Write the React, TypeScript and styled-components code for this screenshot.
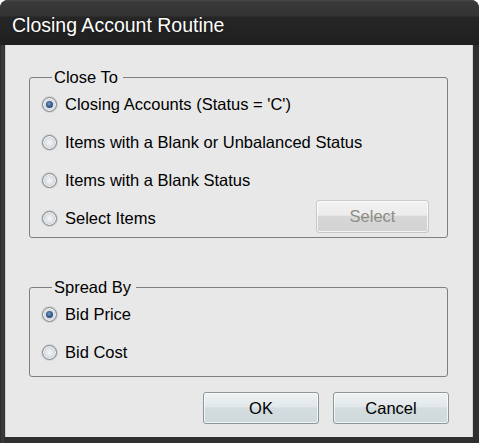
import React from "react";
import styled, { createGlobalStyle } from "styled-components";

const GlobalStyle = createGlobalStyle`
  html, body {
    margin: 0;
    padding: 0;
    background: #ffffff;
  }
  body {
    font-family: "Liberation Sans", Arial, sans-serif;
    overflow: hidden;
  }
`;

const Window = styled.div`
  width: 479px;
  height: 443px;
  display: flex;
  flex-direction: column;
  background: #2e2e2e;
  border-radius: 8px 8px 0 0;
  box-sizing: border-box;
  overflow: hidden;
`;

const TitleBar = styled.div`
  height: 45px;
  flex: none;
  display: flex;
  align-items: center;
  padding: 6px 0 0 12px;
  box-sizing: border-box;
  background: linear-gradient(to bottom, #4a4a4a 0px, #3a3a3a 2px, #333333 16px, #262626 17px, #1f1f1f 45px);
`;

const Title = styled.span`
  color: #ffffff;
  font-size: 19.5px;
  line-height: 19px;
  text-shadow: 0 0 2px rgba(0, 0, 0, 0.6);
`;

const Frame = styled.div`
  flex: 1;
  display: flex;
  padding: 0 6px 6px 5px;
  background: linear-gradient(to right, #2c2c2c, #3e3e3e 3px, #2f2f2f 5px);
`;

const Client = styled.div`
  flex: 1;
  display: flex;
  flex-direction: column;
  background: #e8e8e8;
  padding: 24px 25px 12px 24px;
  box-shadow: inset 1px 0 0 #cfcfcf, inset -1px 0 0 #d0d0d0;
`;

const GroupBox = styled.fieldset<{ $gap?: number; $bottom?: number }>`
  margin: ${(p) => p.$gap ?? 0}px 0 0 0;
  padding: 0 18px ${(p) => p.$bottom ?? 0}px 12px;
  border: 1px solid #7f7f7f;
  border-radius: 3px;
  min-width: 0;
`;

const Legend = styled.legend`
  margin-left: 10px;
  padding: 0 5px 0 2px;
  font-size: 16.5px;
  line-height: 16px;
  color: #000000;
`;

const Row = styled.label`
  height: 38px;
  display: flex;
  align-items: center;
  gap: 8px;
  font-size: 16.5px;
  color: #000000;
  cursor: default;
`;

const RowText = styled.span`
  flex: 1;
  white-space: nowrap;
`;

const RadioMark = styled.span<{ $checked?: boolean }>`
  position: relative;
  width: 15px;
  height: 15px;
  flex: none;
  border-radius: 50%;
  box-sizing: border-box;
  border: 1px solid #80858a;
  background: radial-gradient(circle at 50% 50%, #f4f5f6 0%, #dfe2e5 45%, #b4b9be 80%, #a2a7ac 100%);
  box-shadow: inset 0 0 0 1px #fafafa, 0 0 0 1px rgba(190, 194, 198, 0.55);

  &::after {
    content: "";
    display: ${(p) => (p.$checked ? "block" : "none")};
    position: absolute;
    left: 3px;
    top: 3px;
    width: 7px;
    height: 7px;
    border-radius: 50%;
    background: radial-gradient(circle at 45% 40%, #7f9ec8 0%, #3b5e92 45%, #1b3764 100%);
  }
`;

const Button = styled.button<{ $disabled?: boolean }>`
  width: 116px;
  height: 32px;
  padding: 0;
  box-sizing: border-box;
  font-family: "Liberation Sans", Arial, sans-serif;
  font-size: 16.5px;
  border-radius: 3px;
  color: ${(p) => (p.$disabled ? "#8d8d85" : "#000000")};
  border: 1px solid ${(p) => (p.$disabled ? "#c9c9c9" : "#8c979c")};
  background: ${(p) =>
    p.$disabled
      ? "linear-gradient(to bottom, #f2f2f2 0%, #ececec 45%, #d7d7d7 50%, #d2d2d2 100%)"
      : "linear-gradient(to bottom, #eef2f3 0%, #e2e8ea 45%, #d3dcdf 50%, #cfd8db 100%)"};
  box-shadow: inset 0 0 0 1px rgba(255, 255, 255, 0.7);
`;

const SelectButton = styled(Button)`
  width: 113px;
  height: 33px;
  margin-top: -3px;
`;

const ButtonBar = styled.div`
  display: flex;
  justify-content: flex-end;
  gap: 14px;
  margin: 15px -1px 0 0;
`;

type Option = { label: string; checked?: boolean };

const closeOptions: Option[] = [
  { label: "Closing Accounts (Status = 'C')", checked: true },
  { label: "Items with a Blank or Unbalanced Status" },
  { label: "Items with a Blank Status" },
];

const spreadOptions: Option[] = [{ label: "Bid Price", checked: true }, { label: "Bid Cost" }];

export default function App() {
  return (
    <>
      <GlobalStyle />
      <Window>
        <TitleBar>
          <Title>Closing Account Routine</Title>
        </TitleBar>
        <Frame>
          <Client>
            <GroupBox>
              <Legend>Close To</Legend>
              {closeOptions.map((o) => (
                <Row key={o.label}>
                  <RadioMark $checked={o.checked} />
                  <RowText>{o.label}</RowText>
                </Row>
              ))}
              <Row>
                <RadioMark />
                <RowText>Select Items</RowText>
                <SelectButton $disabled>Select</SelectButton>
              </Row>
            </GroupBox>
            <GroupBox $gap={41} $bottom={5}>
              <Legend>Spread By</Legend>
              {spreadOptions.map((o) => (
                <Row key={o.label}>
                  <RadioMark $checked={o.checked} />
                  <RowText>{o.label}</RowText>
                </Row>
              ))}
            </GroupBox>
            <ButtonBar>
              <Button>OK</Button>
              <Button>Cancel</Button>
            </ButtonBar>
          </Client>
        </Frame>
      </Window>
    </>
  );
}
